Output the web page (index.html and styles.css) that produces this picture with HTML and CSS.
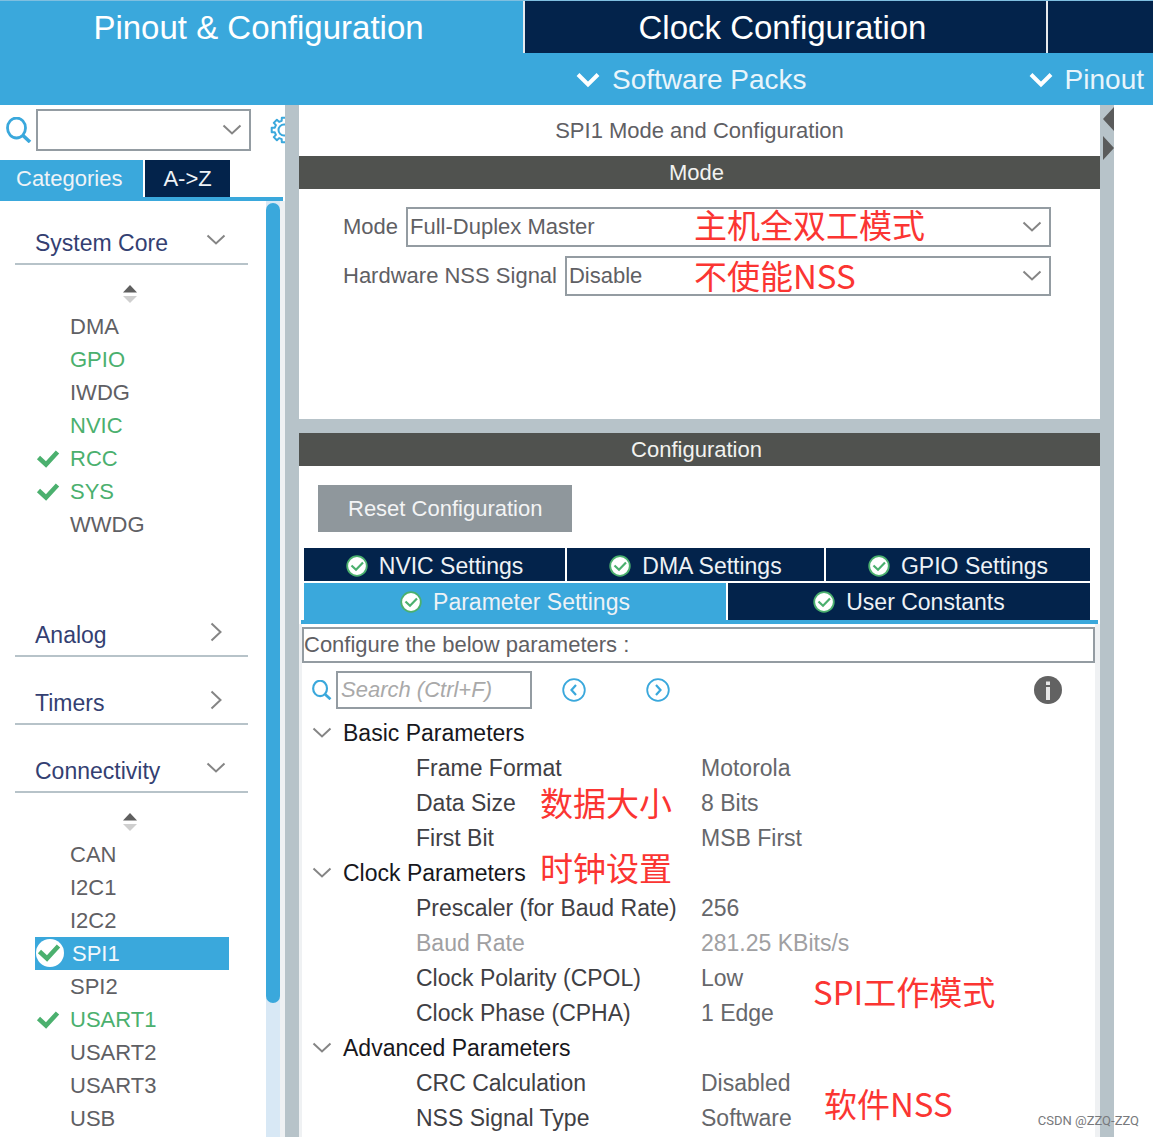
FILE: index.html
```html
<!DOCTYPE html>
<html lang="en">
<head>
<meta charset="utf-8">
<title>Pinout &amp; Configuration</title>
<link rel="stylesheet" href="styles.css">
</head>
<body>
<svg class="defs" aria-hidden="true">
  <symbol id="chev-down" viewBox="0 0 20 12"><path d="M1.5 1.500L10 9.500L18.500 1.500" fill="none" stroke="currentColor" stroke-width="2"/></symbol>
  <symbol id="chev-right" viewBox="0 0 12 20"><path d="M1.500 1.500L10.500 10L1.500 18.500" fill="none" stroke="currentColor" stroke-width="2"/></symbol>
  <symbol id="chev-bold" viewBox="0 0 24 16"><path d="M2 2.500L12 12.500L22 2.500" fill="none" stroke="currentColor" stroke-width="4"/></symbol>
  <symbol id="magnifier" viewBox="0 0 26 26"><ellipse cx="10.500" cy="11" rx="9" ry="10" fill="none" stroke="currentColor" stroke-width="2.800"/><path d="M17 18.500L24 25" stroke="currentColor" stroke-width="3.600"/></symbol>
  <symbol id="tick" viewBox="0 0 24 20"><path d="M2.500 8.500L10 15.500L21.500 3" fill="none" stroke="currentColor" stroke-width="4.600"/></symbol>
  <symbol id="tick-round" viewBox="0 0 22 22"><circle cx="11" cy="11" r="9.800" fill="#fff" stroke="#4bb06e" stroke-width="1.800"/><path d="M5.500 10.500L10 14.800L17 7.500" fill="none" stroke="#4bb06e" stroke-width="2.200"/></symbol>
  <symbol id="sort" viewBox="0 0 14 20"><path d="M7 1L14 8.500H0Z" fill="#5f5f5f"/><path d="M0 12H14L7 19Z" fill="#cfcfcf"/></symbol>
</svg>

<header>
  <nav class="top-tabs">
    <button class="top-tab active">Pinout &amp; Configuration</button>
    <button class="top-tab">Clock Configuration</button>
    <button class="top-tab" aria-label="Project Manager"></button>
  </nav>
  <div class="sub-menu">
    <button class="menu"><svg class="menu-chev"><use href="#chev-bold"/></svg>Software Packs</button>
    <button class="menu"><svg class="menu-chev"><use href="#chev-bold"/></svg>Pinout</button>
  </div>
</header>

<div class="workspace">
  <aside class="sidebar">
    <div class="finder">
      <svg class="find-icon"><use href="#magnifier"/></svg>
      <div class="picker finder-picker">
        <select aria-label="Find peripheral"><option></option></select>
        <svg class="chev picker-chev"><use href="#chev-down"/></svg>
      </div>
      <button class="gear" aria-label="Settings">
        <svg width="28" height="28" viewBox="-14 -14 28 28" fill="none" stroke="currentColor" stroke-width="2" stroke-linejoin="round"><circle r="5.500"/><path d="M9.200-2.300L12.300-2.200V2.200L9.200 2.300L8.100 4.900L10.200 7.100L7.100 10.200L4.900 8.100L2.300 9.200L2.200 12.300H-2.200L-2.300 9.200L-4.900 8.100L-7.100 10.200L-10.200 7.100L-8.100 4.900L-9.200 2.300L-12.300 2.200V-2.200L-9.200-2.300L-8.100-4.900L-10.200-7.100L-7.100-10.200L-4.900-8.100L-2.300-9.200L-2.200-12.300H2.200L2.300-9.200L4.900-8.100L7.100-10.200L10.200-7.100L8.100-4.900Z"/></svg>
      </button>
    </div>
    <nav class="side-tabs">
      <button class="side-tab active">Categories</button>
      <button class="side-tab">A-&gt;Z</button>
    </nav>
    <div class="side-body">
      <div class="groups">
        <section>
          <button class="group-head first">System Core<svg class="chev"><use href="#chev-down"/></svg></button>
          <div class="sorter"><svg width="14" height="20"><use href="#sort"/></svg></div>
          <ul>
            <li><a href="#">DMA</a></li>
            <li><a href="#" class="on">GPIO</a></li>
            <li><a href="#">IWDG</a></li>
            <li><a href="#" class="on">NVIC</a></li>
            <li><a href="#" class="on"><svg class="tick"><use href="#tick"/></svg>RCC</a></li>
            <li><a href="#" class="on"><svg class="tick"><use href="#tick"/></svg>SYS</a></li>
            <li><a href="#">WWDG</a></li>
          </ul>
        </section>
        <section><button class="group-head">Analog<svg class="chev-side"><use href="#chev-right"/></svg></button></section>
        <section><button class="group-head">Timers<svg class="chev-side"><use href="#chev-right"/></svg></button></section>
        <section>
          <button class="group-head">Connectivity<svg class="chev"><use href="#chev-down"/></svg></button>
          <div class="sorter"><svg width="14" height="20"><use href="#sort"/></svg></div>
          <ul class="last">
            <li><a href="#">CAN</a></li>
            <li><a href="#">I2C1</a></li>
            <li><a href="#">I2C2</a></li>
            <li><a href="#" class="selected"><span class="badge"><svg class="tick"><use href="#tick"/></svg></span>SPI1</a></li>
            <li><a href="#">SPI2</a></li>
            <li><a href="#" class="on"><svg class="tick"><use href="#tick"/></svg>USART1</a></li>
            <li><a href="#">USART2</a></li>
            <li><a href="#">USART3</a></li>
            <li><a href="#">USB</a></li>
          </ul>
        </section>
      </div>
      <div class="scrollbar"><div class="thumb"></div></div>
    </div>
  </aside>

  <main>
    <h1>SPI1 Mode and Configuration</h1>
    <h2>Mode</h2>
    <section class="mode">
      <div class="field">
        <label for="mode">Mode</label>
        <div class="picker">
          <select id="mode"><option>Full-Duplex Master</option></select>
          <svg class="chev picker-chev"><use href="#chev-down"/></svg>
        </div>
      </div>
      <div class="field">
        <label for="nss">Hardware NSS Signal</label>
        <div class="picker">
          <select id="nss"><option>Disable</option></select>
          <svg class="chev picker-chev"><use href="#chev-down"/></svg>
        </div>
      </div>
      <span class="note note-mode">主机全双工模式</span>
      <span class="note note-nss">不使能NSS</span>
    </section>
    <h2 class="split-above">Configuration</h2>
    <section class="config">
      <button class="reset">Reset Configuration</button>
      <nav class="tabs">
        <div class="tab-row upper">
          <button class="tab"><svg class="ok"><use href="#tick-round"/></svg>NVIC Settings</button>
          <button class="tab"><svg class="ok"><use href="#tick-round"/></svg>DMA Settings</button>
          <button class="tab"><svg class="ok"><use href="#tick-round"/></svg>GPIO Settings</button>
        </div>
        <div class="tab-row lower">
          <button class="tab active"><svg class="ok"><use href="#tick-round"/></svg>Parameter Settings</button>
          <button class="tab"><svg class="ok"><use href="#tick-round"/></svg>User Constants</button>
        </div>
      </nav>
      <div class="params">
        <p class="hint">Configure the below parameters :</p>
        <div class="tools">
          <svg class="search-icon"><use href="#magnifier"/></svg>
          <input type="text" placeholder="Search (Ctrl+F)" aria-label="Search parameters">
          <button class="step" aria-label="Previous"><svg width="24" height="24" viewBox="0 0 24 24" fill="none" stroke="currentColor"><circle cx="12" cy="12" r="10.800" stroke-width="1.800"/><path d="M14 7L9.500 12L14 17" stroke-width="2.200"/></svg></button>
          <button class="step" aria-label="Next"><svg width="24" height="24" viewBox="0 0 24 24" fill="none" stroke="currentColor"><circle cx="12" cy="12" r="10.800" stroke-width="1.800"/><path d="M10 7L14.500 12L10 17" stroke-width="2.200"/></svg></button>
          <button class="info" aria-label="Information"><svg width="28" height="28" viewBox="0 0 28 28"><circle cx="14" cy="14" r="14" fill="#626262"/><path d="M12 5.500H16V9H12ZM12 11H16V24H12Z" fill="#e6e6e6"/></svg></button>
        </div>
        <table>
          <colgroup><col class="name-col"><col></colgroup>
          <tbody>
            <tr><th colspan="2"><button class="fold"><svg class="chev"><use href="#chev-down"/></svg>Basic Parameters</button></th></tr>
            <tr><td>Frame Format</td><td>Motorola</td></tr>
            <tr><td>Data Size</td><td>8 Bits</td></tr>
            <tr><td>First Bit</td><td>MSB First</td></tr>
          </tbody>
          <tbody>
            <tr><th colspan="2"><button class="fold"><svg class="chev"><use href="#chev-down"/></svg>Clock Parameters</button></th></tr>
            <tr><td>Prescaler (for Baud Rate)</td><td>256</td></tr>
            <tr class="off"><td>Baud Rate</td><td>281.25 KBits/s</td></tr>
            <tr><td>Clock Polarity (CPOL)</td><td>Low</td></tr>
            <tr><td>Clock Phase (CPHA)</td><td>1 Edge</td></tr>
          </tbody>
          <tbody>
            <tr><th colspan="2"><button class="fold"><svg class="chev"><use href="#chev-down"/></svg>Advanced Parameters</button></th></tr>
            <tr><td>CRC Calculation</td><td>Disabled</td></tr>
            <tr><td>NSS Signal Type</td><td>Software</td></tr>
          </tbody>
        </table>
        <span class="note note-size">数据大小</span>
        <span class="note note-clock">时钟设置</span>
        <span class="note note-work">SPI工作模式</span>
        <span class="note note-soft">软件NSS</span>
      </div>
    </section>
  </main>

  <div class="splitter">
    <svg width="14" height="56" viewBox="0 0 14 56"><path d="M14 2V26L3 14ZM3 31V55L14 43Z" fill="#5a5b5b"/></svg>
  </div>
  <div class="view"></div>
</div>
<span class="watermark">CSDN @ZZQ-ZZQ</span>
</body>
</html>
```
FILE: styles.css
```css
:root {
  --blue: #3aa8dc;
  --navy: #03234b;
  --bar: #50524f;
  --split: #b7c3c9;
  --edge: #949ca2;
  --strip: #eff1f3;
  --text: #5f6064;
  --green: #4bb06e;
}

* { box-sizing: border-box; }

body {
  margin: 0;
  min-height: 100vh;
  display: flex;
  flex-direction: column;
  position: relative;
  overflow-x: hidden;
  background: #fff;
  color: var(--text);
  font: 22px/28px "Liberation Sans", Arial, sans-serif;
}

button, select, input {
  font: inherit;
  color: inherit;
  border: 0;
  border-radius: 0;
  padding: 0;
  margin: 0;
  background: none;
}

svg { display: block; flex: none; }
.defs { position: absolute; width: 0; height: 0; }
.chev { width: 20px; height: 12px; color: #858585; }
.chev-side { width: 12px; height: 20px; color: #858585; margin-right: 4px; }

/* Header */
.top-tabs {
  display: grid;
  grid-template-columns: 523fr 523fr 107fr;
  border-top: 1px solid #7fbfe0;
  background: var(--navy);
}
.top-tab {
  height: 52px;
  padding: 2px 6px 0 0;
  font-size: 33px;
  color: #fff;
  border-left: 2px solid #e6eaee;
}
.top-tab.active {
  background: var(--blue);
  border-left: 0;
}
.sub-menu {
  height: 52px;
  display: flex;
  justify-content: flex-end;
  align-items: center;
  gap: 222px;
  padding: 2px 9px 0 0;
  background: var(--blue);
}
.menu {
  display: flex;
  align-items: center;
  gap: 12px;
  font-size: 28px;
  color: #e9f5fb;
}
.menu-chev { width: 24px; height: 16px; color: #fff; }

/* Workspace */
.workspace {
  flex: 1;
  display: grid;
  grid-template-columns: 285px minmax(0, 1fr) 14px 39px;
}

/* Sidebar */
.sidebar {
  display: flex;
  flex-direction: column;
  overflow: hidden;
}
.finder {
  display: flex;
  align-items: center;
  height: 55px;
  padding: 0 0 6px 6px;
}
.find-icon { width: 26px; height: 26px; color: var(--blue); }
.picker { position: relative; flex: 1; }
.finder-picker { flex: 0 0 215px; margin: 0 19px 0 4px; }
.picker select {
  display: block;
  width: 100%;
  height: 40px;
  padding: 0 40px 0 2px;
  appearance: none;
  border: 2px solid var(--edge);
  background: #fff;
}
.finder-picker select { height: 42px; }
.picker-chev {
  position: absolute;
  right: 9px;
  top: 50%;
  margin-top: -6px;
  pointer-events: none;
}
.gear { color: var(--blue); }

.side-tabs {
  display: flex;
  gap: 2px;
  margin-right: 2px;
  border-bottom: 4px solid var(--blue);
}
.side-tab {
  height: 37px;
  padding: 0 18px;
  color: #eef3f7;
  background: var(--navy);
}
.side-tab.active { padding: 0 21px 0 16px; background: var(--blue); }

.side-body { flex: 1; display: flex; }
.groups { flex: 1; padding: 0 18px 0 15px; }
.group-head {
  display: flex;
  width: 100%;
  height: 68px;
  padding: 32px 22px 6px 20px;
  justify-content: space-between;
  align-items: center;
  border-bottom: 2px solid var(--split);
  font-size: 23px;
  color: #343f72;
}
.group-head.first { height: 64px; padding-top: 28px; }
.group-head svg { position: relative; top: -3px; }
.sorter {
  display: flex;
  justify-content: center;
  height: 45px;
  padding-top: 19px;
  padding-right: 4px;
}
.groups ul {
  margin: 0;
  padding: 0 19px 48px 20px;
  list-style: none;
}
.groups ul.last { padding-bottom: 0; }
.groups a {
  display: block;
  position: relative;
  height: 33px;
  padding-left: 35px;
  line-height: 33px;
  color: var(--text);
  text-decoration: none;
}
.groups a.on { color: var(--green); }
.groups a.selected { padding-left: 37px; background: var(--blue); color: #f2f8fc; }
.tick {
  position: absolute;
  left: 1px;
  top: 7px;
  width: 24px;
  height: 20px;
  color: var(--green);
}
.badge {
  position: absolute;
  left: 1px;
  top: 2px;
  width: 28px;
  height: 28px;
  border-radius: 50%;
  background: #fff;
}
.badge .tick { top: 4px; }

.scrollbar {
  width: 19px;
  padding-top: 2px;
  border-right: 5px solid var(--strip);
  background: #d8e8f5;
}
.thumb { height: 800px; border-radius: 7px; background: var(--blue); }

/* Main panel */
main { display: flex; flex-direction: column; border-left: 14px solid var(--split); }
h1, h2 {
  margin: 0;
  font-size: 22px;
  font-weight: normal;
  text-align: center;
}
h1 { line-height: 51px; }
h2 {
  padding-right: 6px;
  line-height: 33px;
  color: #f2f2f0;
  background: var(--bar);
}
.split-above { border-top: 14px solid var(--split); }

.mode {
  position: relative;
  display: flex;
  flex-direction: column;
  gap: 9px;
  min-height: 230px;
  padding: 18px 49px 0 44px;
}
.field { display: flex; align-items: center; gap: 8px; }

.config { flex: 1; display: flex; flex-direction: column; align-items: stretch; }
.reset {
  align-self: flex-start;
  height: 47px;
  margin: 19px 0 16px 19px;
  padding: 0 30px;
  color: #f3f4f5;
  background: #8f979c;
}
.tabs {
  display: grid;
  gap: 2px;
  margin: 0 2px;
  padding: 0 8px 0 3px;
  border-bottom: 4px solid var(--blue);
}
.tab-row { display: grid; gap: 2px; }
.upper { grid-template-columns: 261fr 257fr 264fr; }
.lower { grid-template-columns: 422fr 362fr; }
.tab {
  display: flex;
  justify-content: center;
  align-items: center;
  gap: 11px;
  height: 33px;
  padding-top: 2px;
  font-size: 23px;
  color: #eef2f6;
  background: var(--navy);
}
.lower .tab { height: 37px; padding-top: 0; }
.tab.active { background: var(--blue); }
.ok { width: 22px; height: 22px; }

.params {
  position: relative;
  flex: 1;
  padding-top: 3px;
  border: solid var(--strip);
  border-width: 0 5px 0 3px;
}
.hint {
  margin: 0;
  padding: 2px 0;
  border: 2px solid var(--edge);
}
.tools {
  display: flex;
  align-items: center;
  height: 52px;
  padding: 2px 33px 0 10px;
}
.search-icon { width: 20px; height: 20px; margin-right: 4px; color: var(--blue); }
.tools input {
  width: 196px;
  height: 38px;
  padding: 0 3px;
  border: 2px solid var(--edge);
}
.tools input::placeholder { font-style: italic; color: #a9a9a9; opacity: 1; }
.step { margin-left: 30px; color: var(--blue); }
.step + .step { margin-left: 60px; }
.info { margin-left: auto; }

table {
  width: 100%;
  table-layout: fixed;
  border-collapse: collapse;
  font-size: 23px;
}
.name-col { width: 399px; }
th, td { height: 35px; padding: 0; text-align: left; font-weight: normal; }
td:first-child { padding-left: 114px; color: #3f4044; }
td:last-child { color: #66676b; }
tr.off td { color: #a0a0a2; }
.fold {
  display: flex;
  align-items: center;
  gap: 11px;
  padding-left: 10px;
  color: #17171c;
}

/* Red notes written over the panels */
.note {
  position: absolute;
  font: 33px/40px "Noto Sans CJK SC", sans-serif;
  color: #fb3532;
  white-space: nowrap;
  pointer-events: none;
}
.note-mode { left: 395px; top: 15px; }
.note-nss { left: 395px; top: 66px; }
.note-size { left: 238px; top: 158px; }
.note-clock { left: 238px; top: 223px; }
.note-work { left: 511px; top: 347px; }
.note-soft { left: 522px; top: 459px; }

.splitter { background: var(--split); }
.watermark {
  position: absolute;
  right: 14px;
  bottom: 6px;
  font: 13px/20px Roboto, sans-serif;
  color: #77797c;
}
```
